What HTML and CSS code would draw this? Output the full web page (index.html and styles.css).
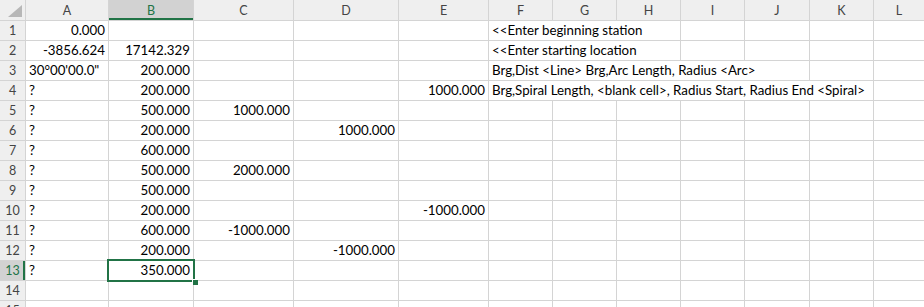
FILE: index.html
```html
<!DOCTYPE html>
<html lang="en">
<head>
    <meta charset="UTF-8">
    <meta name="viewport" content="width=device-width, initial-scale=1.0">
    <title>Alignment Calculator</title>
    <link rel="stylesheet" href="styles.css">
</head>
<body>
    <div class="sheet" id="sheet"></div>

    <script>
        const letters = ['A', 'B', 'C', 'D', 'E', 'F', 'G', 'H', 'I', 'J', 'K', 'L'];
        const activeCol = 1;   // column B
        const activeRow = 13;

        // each row: { column index: value } -- numbers are shown with 3 decimals
        const rows = [
            { 0: 0, 5: ['<<Enter beginning station', 3] },
            { 0: -3856.624, 1: 17142.329, 5: ['<<Enter starting location', 3] },
            { 0: '30°00\'00.0"', 1: 200, 5: ['Brg,Dist <Line> Brg,Arc Length, Radius <Arc>', 5] },
            { 0: '?', 1: 200, 4: 1000, 5: ['Brg,Spiral Length, <blank cell>, Radius Start, Radius End <Spiral>', 6] },
            { 0: '?', 1: 500, 2: 1000 },
            { 0: '?', 1: 200, 3: 1000 },
            { 0: '?', 1: 600 },
            { 0: '?', 1: 500, 2: 2000 },
            { 0: '?', 1: 500 },
            { 0: '?', 1: 200, 4: -1000 },
            { 0: '?', 1: 600, 2: -1000 },
            { 0: '?', 1: 200, 3: -1000 },
            { 0: '?', 1: 350 },
            {},
            {}
        ];

        const sheet = document.getElementById('sheet');

        function addCell(cls, text, span) {
            const el = document.createElement('div');
            el.className = cls;
            if (text !== undefined) el.textContent = text;
            if (span) el.style.gridColumn = 'span ' + span;
            sheet.appendChild(el);
            return el;
        }

        // header row
        const corner = addCell('corner');
        corner.innerHTML = '<span class="corner-mark"></span>';
        letters.forEach((l, i) => {
            addCell(i === activeCol ? 'col-head active' : 'col-head', l);
        });

        rows.forEach((row, r) => {
            const n = r + 1;
            addCell(n === activeRow ? 'row-head active' : 'row-head', n);
            let c = 0;
            while (c < letters.length) {
                let v = row[c];
                let span = 0;
                if (Array.isArray(v)) {
                    span = v[1];
                    v = v[0];
                }
                let cell;
                if (typeof v === 'number') {
                    cell = addCell('cell num', v.toFixed(3));
                } else if (typeof v === 'string') {
                    cell = addCell('cell txt', v, span);
                } else {
                    cell = addCell('cell');
                }
                if (n === activeRow && c === activeCol) {
                    cell.classList.add('selected');
                    cell.innerHTML += '<span class="handle"></span>';
                }
                c += span || 1;
            }
        });
    </script>
</body>
</html>
```

FILE: styles.css
```css
body {
    margin: 0;
    overflow: hidden;
    background: #fff;
    font-family: Lato, "Open Sans", sans-serif;
}
.sheet {
    display: grid;
    grid-template-columns: 25px 82px 84px 99px 104px 89px 63px 63px 63px 63px 64px 63px 1fr;
    grid-template-rows: 20px;
    grid-auto-rows: 19px;
    gap: 1px;
    background: #d4d4d4;
    width: 924px;
}
.corner {
    background: #efefef;
    position: relative;
}
.corner-mark {
    position: absolute;
    right: 3px;
    bottom: 3px;
    width: 0;
    height: 0;
    border-left: 14px solid transparent;
    border-bottom: 12px solid #b7b7b7;
}
.col-head, .row-head {
    background: #efefef;
    color: #444;
    font-size: 12.5px;
    display: flex;
    align-items: center;
    justify-content: center;
}
.col-head.active {
    background: #d2d2d2;
    color: #217346;
    box-shadow: inset 0 -2px 0 #217346;
}
.row-head.active {
    background: #d2d2d2;
    color: #217346;
    box-shadow: inset -2px 0 0 #217346;
}
.cell {
    background: #fff;
    color: #000;
    font-size: 13.3px;
    line-height: 19px;
    padding: 0 3px;
    white-space: nowrap;
    overflow: hidden;
    position: relative;
}
.num {
    text-align: right;
}
.txt {
    text-align: left;
}
.selected {
    overflow: visible;
    outline: 2px solid #217346;
    z-index: 1;
}
.handle {
    position: absolute;
    right: -5px;
    bottom: -5px;
    width: 5px;
    height: 5px;
    background: #217346;
    border: 1px solid #fff;
    border-width: 1px 0 0 1px;
}
```
